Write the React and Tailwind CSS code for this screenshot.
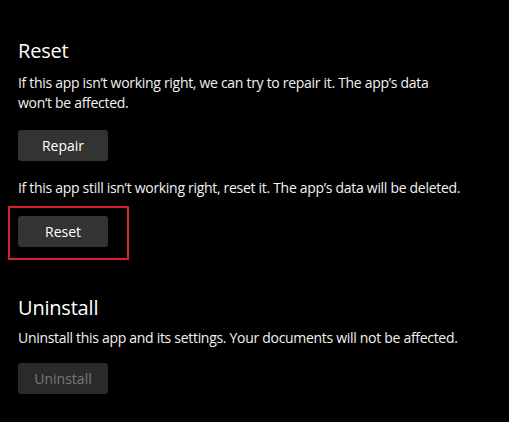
const Button = ({ label, disabled }) => (
  <button
    disabled={disabled}
    className={
      disabled
        ? 'w-[90px] h-[31px] rounded-[3px] bg-[#2a2a2a] text-[#787878] text-[14px]'
        : 'w-[90px] h-[31px] rounded-[3px] bg-[#333333] text-white text-[14px]'
    }
  >
    {label}
  </button>
)

export default function App() {
  return (
    <div className="w-[509px] h-[422px] bg-black text-white pl-[18px] pt-[37px] font-['Open_Sans',sans-serif]">
      {/* Reset section */}
      <h2 className="text-[20px] leading-[28px] tracking-[-0.2px]">Reset</h2>
      <p className="mt-[8px] text-[14px] leading-[20px] tracking-[-0.3px] text-[#f2f2f2] w-[440px]">
        If this app isn’t working right, we can try to repair it. The app’s data won’t be affected.
      </p>
      <div className="mt-[17px]">
        <Button label="Repair" />
      </div>
      <p className="mt-[17px] text-[14px] leading-[20px] tracking-[-0.3px] text-[#f2f2f2]">
        If this app still isn’t working right, reset it. The app’s data will be deleted.
      </p>
      <div className="mt-[18px] relative">
        <Button label="Reset" />
        <div className="absolute left-[-10px] top-[-10px] w-[121px] h-[54px] border-2 border-[#d9202c]" />
      </div>

      {/* Uninstall section */}
      <h2 className="mt-[47px] text-[20px] leading-[28px] tracking-[-0.2px]">Uninstall</h2>
      <p className="mt-[6px] text-[14px] leading-[20px] tracking-[-0.3px] text-[#f2f2f2]">
        Uninstall this app and its settings. Your documents will not be affected.
      </p>
      <div className="mt-[15px]">
        <Button label="Uninstall" disabled />
      </div>
    </div>
  )
}
